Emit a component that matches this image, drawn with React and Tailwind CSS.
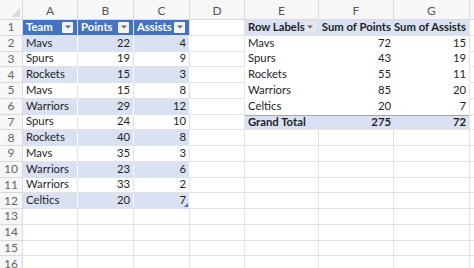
import React from "react";

const cols = ["A", "B", "C", "D", "E", "F", "G", ""];

const table = [
  ["Mavs", 22, 4],
  ["Spurs", 19, 9],
  ["Rockets", 15, 3],
  ["Mavs", 15, 8],
  ["Warriors", 29, 12],
  ["Spurs", 24, 10],
  ["Rockets", 40, 8],
  ["Mavs", 35, 3],
  ["Warriors", 23, 6],
  ["Warriors", 33, 2],
  ["Celtics", 20, 7],
];

const pivot = [
  ["Mavs", 72, 15],
  ["Spurs", 43, 19],
  ["Rockets", 55, 11],
  ["Warriors", 85, 20],
  ["Celtics", 20, 7],
];

function Dropdown({ light }) {
  return (
    <span
      className={`ml-auto mr-[1px] flex h-[11px] w-[11px] shrink-0 items-center justify-center rounded-[1px] ${
        light ? "bg-[#e8e8e8]" : "bg-[#f3f3f3]"
      }`}
    >
      <svg width="6" height="4" viewBox="0 0 6 4">
        <path d="M0 0.5h6L3 3.5z" fill="#6b6b6b" />
      </svg>
    </span>
  );
}

function Cell({ children, className = "" }) {
  return (
    <div
      className={`flex items-center overflow-visible whitespace-nowrap border-r border-b border-[#e3e3e3] px-[3px] ${className}`}
    >
      {children}
    </div>
  );
}

export default function App() {
  const rows = [];

  // row 1: headers
  rows.push(
    <React.Fragment key="r1">
      <div className="flex items-center justify-center border-r border-b border-[#dadada] bg-[#f7f7f7] text-[12px] text-[#666]">1</div>
      {["Team", "Points", "Assists"].map((h) => (
        <Cell key={h} className="border-[#4472c4] bg-[#4472c4] font-bold text-white">
          <span>{h}</span>
          <Dropdown />
        </Cell>
      ))}
      <Cell />
      <Cell className="border-r-0 bg-[#d9e1f2] font-bold text-[#1f1f1f]">
        <span>Row Labels</span>
        <Dropdown light />
      </Cell>
      <Cell className="justify-end border-r-0 bg-[#d9e1f2] font-bold text-[#1f1f1f]">Sum of Points</Cell>
      <Cell className="justify-end bg-[#d9e1f2] font-bold text-[#1f1f1f]">Sum of Assists</Cell>
      <Cell />
    </React.Fragment>
  );

  for (let r = 2; r <= 16; r++) {
    const t = table[r - 2];
    const band = t && r % 2 === 0;
    const bandCls = band ? "bg-[#d9e1f2] border-r-white border-b-[#d9e1f2]" : "";
    const p = pivot[r - 2];
    const isTotal = r === 7;
    rows.push(
      <React.Fragment key={r}>
        <div className="flex items-center justify-center border-r border-b border-[#dadada] bg-[#f7f7f7] text-[12px] text-[#666]">
          {r}
        </div>
        <Cell className={bandCls}>{t ? t[0] : ""}</Cell>
        <Cell className={`justify-end ${bandCls}`}>{t ? t[1] : ""}</Cell>
        <Cell className={`relative justify-end ${bandCls}`}>
          {t ? t[2] : ""}
          {r === 12 && (
            <svg className="absolute right-[1px] bottom-[1px]" width="4" height="4" viewBox="0 0 4 4">
              <path d="M4 0V4H0z" fill="#4472c4" />
            </svg>
          )}
        </Cell>
        <Cell />
        {p ? (
          <>
            <Cell className="border-r-0 border-b-white">{p[0]}</Cell>
            <Cell className="justify-end border-r-0 border-b-white">{p[1]}</Cell>
            <Cell className="justify-end border-b-white">{p[2]}</Cell>
          </>
        ) : isTotal ? (
          <>
            <Cell className="border-t border-t-[#8ea9db] border-r-0 bg-[#d9e1f2] font-bold">Grand Total</Cell>
            <Cell className="justify-end border-t border-t-[#8ea9db] border-r-0 bg-[#d9e1f2] font-bold">275</Cell>
            <Cell className="justify-end border-t border-t-[#8ea9db] bg-[#d9e1f2] font-bold">72</Cell>
          </>
        ) : (
          <>
            <Cell />
            <Cell />
            <Cell />
          </>
        )}
        <Cell />
      </React.Fragment>
    );
  }

  return (
    <div className="h-[268px] w-[474px] overflow-hidden bg-white font-['Lato',sans-serif] text-[11.3px] text-[#1f1f1f]">
      <div className="grid w-[540px] grid-cols-[23px_55px_56px_56px_55px_74px_75px_76px_70px] grid-rows-[20px_repeat(16,15.75px)]">
        {/* column letters */}
        <div className="relative border-r border-b border-[#dadada] bg-[#f7f7f7]">
          <svg className="absolute right-[2px] bottom-[2px]" width="9" height="9" viewBox="0 0 9 9">
            <path d="M9 0V9H0z" fill="#dcdcdc" />
          </svg>
        </div>
        {cols.map((c, i) => (
          <div
            key={i}
            className="flex items-center justify-center border-r border-b border-[#dadada] bg-[#f7f7f7] pt-[2px] text-[12px] text-[#555]"
          >
            {c}
          </div>
        ))}
        {rows}
      </div>
    </div>
  );
}
